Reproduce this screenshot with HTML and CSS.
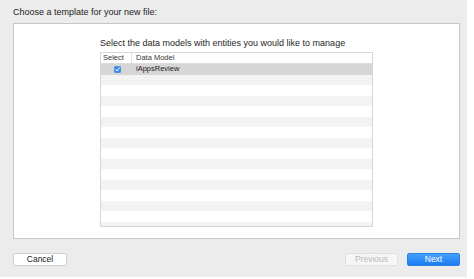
FILE: index.html
```html
<!DOCTYPE html>
<html>
<head>
<meta charset="utf-8">
<link rel="stylesheet" href="styles.css">
</head>
<body>
<div class="window">
  <div class="title">Choose a template for your new file:</div>
  <div class="panel">
    <div class="content">
      <div class="heading">Select the data models with entities you would like to manage</div>
      <div class="table">
        <div class="thead">
          <div class="col-select">Select</div>
          <div class="col-model">Data Model</div>
        </div>
        <div class="rows">
          <div class="row selected">
            <div class="col-select">
              <svg class="check" width="7" height="7" viewBox="0 0 14 14"><rect x="0.5" y="0.5" width="13" height="13" rx="3" fill="#3b8cf2" stroke="#2f74d6"/><path d="M3.5 7.3 L6 10 L10.6 3.8" fill="none" stroke="#fff" stroke-width="2" stroke-linecap="round" stroke-linejoin="round"/></svg>
            </div>
            <div class="col-model">iAppsReview</div>
          </div>
          <div class="row"></div><div class="row"></div><div class="row"></div><div class="row"></div>
          <div class="row"></div><div class="row"></div><div class="row"></div><div class="row"></div>
          <div class="row"></div><div class="row"></div><div class="row"></div><div class="row"></div>
          <div class="row"></div><div class="row"></div><div class="row"></div>
        </div>
      </div>
    </div>
  </div>
  <div class="buttons">
    <button class="btn">Cancel</button>
    <div class="right">
      <button class="btn disabled">Previous</button>
      <button class="btn primary">Next</button>
    </div>
  </div>
</div>
</body>
</html>
```

FILE: styles.css
```css
html, body {
  margin: 0;
  padding: 0;
  background: #ffffff;
}
body {
  font-family: "Liberation Sans", Arial, sans-serif;
  color: #1a1a1a;
}
.window {
  width: 467px;
  height: 277px;
  box-sizing: border-box;
  background: #ececec;
  padding: 7px 7px 0 13px;
  display: flex;
  flex-direction: column;
}
.title {
  font-size: 9px;
  line-height: 11px;
  height: 11px;
  margin-bottom: 5px;
  color: #222;
}
.panel {
  width: 447px;
  height: 216px;
  box-sizing: border-box;
  background: #ffffff;
  border: 1px solid #c6c6c6;
  display: flex;
  justify-content: center;
}
.content {
  width: 273px;
  padding-top: 14px;
  display: flex;
  flex-direction: column;
}
.heading {
  font-size: 9px;
  line-height: 11px;
  height: 11px;
  margin-bottom: 3px;
  white-space: nowrap;
  color: #1e1e1e;
}
.table {
  width: 273px;
  box-sizing: border-box;
  border: 1px solid #d6d6d6;
  display: flex;
  flex-direction: column;
}
.thead {
  height: 10px;
  border-bottom: 1px solid #dcdcdc;
  display: flex;
  font-size: 7.5px;
  line-height: 10px;
  color: #3a3a3a;
}
.thead .col-select {
  border-right: 1px solid #e2e2e2;
  padding-left: 2px;
}
.col-select {
  width: 31px;
  box-sizing: border-box;
  flex: none;
}
.col-model {
  padding-left: 4px;
}
.rows {
  height: 162px;
  overflow: hidden;
}
.row {
  height: 10.5px;
  display: flex;
  font-size: 7.5px;
  line-height: 10.5px;
  color: #222;
}
.row:nth-child(even) {
  background: #f3f3f3;
}
.row.selected {
  background: #d6d6d6;
}
.row .col-select {
  display: flex;
  justify-content: center;
  align-items: center;
  padding-left: 1px;
}
.check {
  display: block;
  margin-top: 1px;
}
.buttons {
  margin-top: 14px;
  width: 447px;
  display: flex;
  justify-content: space-between;
}
.right {
  display: flex;
  gap: 9px;
}
.btn {
  height: 13px;
  box-sizing: border-box;
  border: 1px solid #cfcfcf;
  border-radius: 2px;
  background: #ffffff;
  font-family: "Liberation Sans", Arial, sans-serif;
  font-size: 8.5px;
  line-height: 11px;
  padding: 0;
  width: 54px;
  color: #1a1a1a;
  text-align: center;
}
.btn.disabled {
  width: 53px;
  background: #f6f6f6;
  border-color: #e0e0e0;
  color: #b9b9b9;
}
.btn.primary {
  width: 53px;
  background: linear-gradient(#45a0fd, #1a7cf1);
  border-color: #2a7fe8;
  color: #ffffff;
}
```
